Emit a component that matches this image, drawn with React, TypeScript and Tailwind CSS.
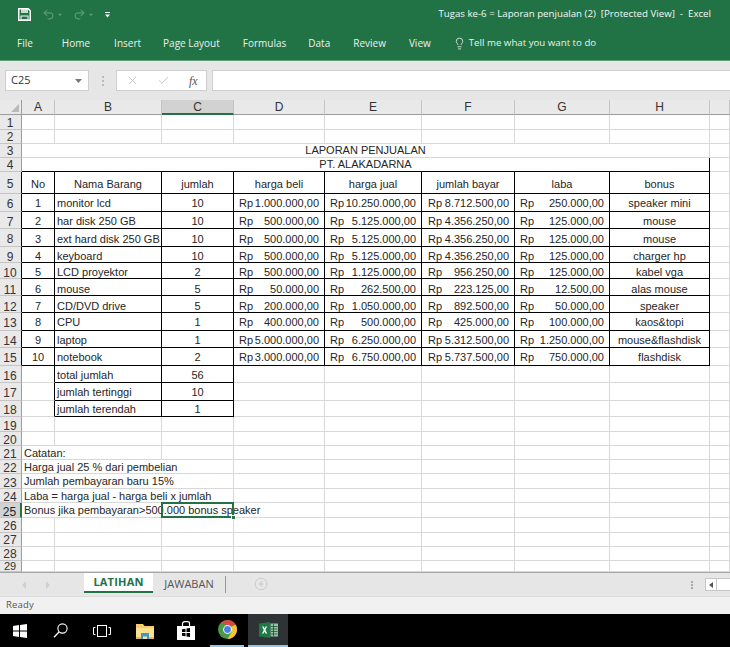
import { Check, CirclePlus, Lightbulb, Redo2, Undo2, X } from 'lucide-react';

const sheetFont = "font-['Liberation_Sans',Arial,sans-serif]";
const uiFont = "font-['Open_Sans','Noto_Sans',sans-serif]";

const rowNumbers = Array.from({ length: 29 }, (_, i) => i + 1);
const columns = ['A', 'B', 'C', 'D', 'E', 'F', 'G', 'H', ''];

type Item = { no: number; name: string; qty: number; buy: string; sell: string; pay: string; profit: string; bonus: string };

const items: Item[] = [
  { no: 1, name: 'monitor lcd', qty: 10, buy: '1.000.000,00', sell: '10.250.000,00', pay: '8.712.500,00', profit: '250.000,00', bonus: 'speaker mini' },
  { no: 2, name: 'har disk 250 GB', qty: 10, buy: '500.000,00', sell: '5.125.000,00', pay: '4.356.250,00', profit: '125.000,00', bonus: 'mouse' },
  { no: 3, name: 'ext hard disk 250 GB', qty: 10, buy: '500.000,00', sell: '5.125.000,00', pay: '4.356.250,00', profit: '125.000,00', bonus: 'mouse' },
  { no: 4, name: 'keyboard', qty: 10, buy: '500.000,00', sell: '5.125.000,00', pay: '4.356.250,00', profit: '125.000,00', bonus: 'charger hp' },
  { no: 5, name: 'LCD proyektor', qty: 2, buy: '500.000,00', sell: '1.125.000,00', pay: '956.250,00', profit: '125.000,00', bonus: 'kabel vga' },
  { no: 6, name: 'mouse', qty: 5, buy: '50.000,00', sell: '262.500,00', pay: '223.125,00', profit: '12.500,00', bonus: 'alas mouse' },
  { no: 7, name: 'CD/DVD drive', qty: 5, buy: '200.000,00', sell: '1.050.000,00', pay: '892.500,00', profit: '50.000,00', bonus: 'speaker' },
  { no: 8, name: 'CPU', qty: 1, buy: '400.000,00', sell: '500.000,00', pay: '425.000,00', profit: '100.000,00', bonus: 'kaos&topi' },
  { no: 9, name: 'laptop', qty: 1, buy: '5.000.000,00', sell: '6.250.000,00', pay: '5.312.500,00', profit: '1.250.000,00', bonus: 'mouse&flashdisk' },
  { no: 10, name: 'notebook', qty: 2, buy: '3.000.000,00', sell: '6.750.000,00', pay: '5.737.500,00', profit: '750.000,00', bonus: 'flashdisk' },
];

const summary = [
  { label: 'total jumlah', value: 56 },
  { label: 'jumlah tertinggi', value: 10 },
  { label: 'jumlah terendah', value: 1 },
];

const notes: Record<number, string> = {
  21: 'Catatan:',
  22: 'Harga jual 25 % dari pembelian',
  23: 'Jumlah pembayaran baru 15%',
  24: 'Laba = harga jual - harga beli x jumlah',
  25: 'Bonus jika pembayaran>500.000 bonus speaker',
};

const tableHead = ['No', 'Nama Barang', 'jumlah', 'harga beli', 'harga jual', 'jumlah bayar', 'laba', 'bonus'];

const grid = 'border-r border-b border-[#d8d8d8]';
const ink = 'border-r border-b border-black';

// text sits a little differently in each row of the scaled screenshot
function rowPad(n: number) {
  if (n >= 9 && n <= 12) return 'pb-0';
  if (n === 7 || n === 8 || n === 14 || n === 16 || n === 18) return 'pb-px';
  if (n === 21 || n === 22 || n === 24) return 'pb-0';
  if (n === 23 || n === 25) return 'pb-px';
  return 'pb-[2px]';
}

function headPad(n: number) {
  if (n === 29) return 'pt-0';
  if (n >= 26) return 'pt-px';
  if (n >= 9 && n <= 12) return 'pt-[5px]';
  return n >= 5 ? 'pt-[3px]' : 'pt-px';
}

function RowHead({ n }: { n: number }) {
  const inTable = n >= 5 && n <= 15;
  return (
    <div
      className={`flex items-center justify-center border-b border-b-[#c4c4c4] border-r pr-px leading-none ${
        n === 29 ? 'text-[11px]' : 'text-[12px]'
      } ${headPad(n)} ${
        n === 25
          ? 'border-r-2 border-r-[#217346] bg-[#d2d2d2] text-[#222]'
          : inTable
            ? 'border-r-black bg-[#e9e9e9] text-[#333]'
            : 'border-r-[#9c9c9c] bg-[#e9e9e9] text-[#333]'
      }`}
    >
      {n}
    </div>
  );
}

function Money({ value, className }: { value: string; className: string }) {
  return (
    <div className={`flex items-end justify-between pr-[5px] ${ink} ${className}`}>
      <span>Rp</span>
      <span>{value}</span>
    </div>
  );
}

function SheetRow({ n }: { n: number }) {
  const pad = rowPad(n);
  if (n === 3 || n === 4) {
    return (
      <>
        <RowHead n={n} />
        <div className={`col-span-8 flex items-center justify-center border-r border-b ${n === 4 ? 'border-black' : 'border-[#d8d8d8]'}`}>
          {n === 3 ? 'LAPORAN PENJUALAN' : 'PT. ALAKADARNA'}
        </div>
        <div className={grid} />
      </>
    );
  }
  if (n === 5) {
    return (
      <>
        <RowHead n={n} />
        {tableHead.map((label) => (
          <div key={label} className={`flex items-end justify-center pb-[3px] ${ink}`}>
            {label}
          </div>
        ))}
        <div className={grid} />
      </>
    );
  }
  if (n >= 6 && n <= 15) {
    const item = items[n - 6];
    return (
      <>
        <RowHead n={n} />
        <div className={`flex items-end justify-center ${pad} ${ink}`}>{item.no}</div>
        <div className={`flex items-end whitespace-nowrap pl-[2px] ${pad} ${ink}`}>{item.name}</div>
        <div className={`flex items-end justify-center ${pad} ${ink}`}>{item.qty}</div>
        <Money value={item.buy} className={`pl-[5px] ${pad}`} />
        <Money value={item.sell} className={`pl-[5px] ${pad}`} />
        <Money value={item.pay} className={`pl-[6px] ${pad}`} />
        <Money value={item.profit} className={`pl-[5px] ${pad}`} />
        <div className={`flex items-end justify-center whitespace-nowrap ${pad} ${ink}`}>{item.bonus}</div>
        <div className={grid} />
      </>
    );
  }
  if (n >= 16 && n <= 18) {
    const row = summary[n - 16];
    return (
      <>
        <RowHead n={n} />
        <div className="border-r border-b border-r-black border-b-[#d8d8d8]" />
        <div className={`flex items-end pl-[2px] ${pad} ${ink}`}>{row.label}</div>
        <div className={`flex items-end justify-center ${pad} ${ink}`}>{row.value}</div>
        {[0, 1, 2, 3, 4, 5].map((i) => (
          <div key={i} className={grid} />
        ))}
      </>
    );
  }
  if (n >= 22 && n <= 24) {
    return (
      <>
        <RowHead n={n} />
        <div className={`col-span-3 flex items-end whitespace-nowrap pl-[2px] ${pad} ${grid}`}>{notes[n]}</div>
        {[0, 1, 2, 3, 4, 5].map((i) => (
          <div key={i} className={grid} />
        ))}
      </>
    );
  }
  return (
    <>
      <RowHead n={n} />
      {columns.map((c, i) => {
        if (i === 1 && notes[n]) return null;
        if (i === 0 && notes[n]) {
          return (
            <div key={c} className={`col-span-2 flex items-end whitespace-nowrap pl-[2px] ${pad} ${grid}`}>
              {notes[n]}
            </div>
          );
        }
        if (i === 2 && n === 25) {
          return (
            <div key={c} className={`relative ${grid}`}>
              <div className="absolute -top-px -left-px -right-px -bottom-px border-2 border-[#217346]" />
              <div className="absolute -right-[3px] -bottom-[3px] h-[5px] w-[5px] border border-white bg-[#217346]" />
            </div>
          );
        }
        return <div key={i} className={grid} />;
      })}
    </>
  );
}

function SaveIcon() {
  return (
    <svg width="13" height="13" viewBox="0 0 13 13" fill="none">
      <path d="M.75.75h9.5l2 2v9.5H.75z" stroke="#fff" strokeWidth="1.5" />
      <rect x="3" y="1" width="7" height="4" fill="#fff" fillOpacity="0.75" />
      <rect x="3" y="8" width="7" height="4" stroke="#fff" strokeWidth="1" />
    </svg>
  );
}

function Caret({ className }: { className: string }) {
  return (
    <svg width="7" height="4" viewBox="0 0 7 4" className={className}>
      <path d="M0 0h7L3.5 4z" fill="currentColor" />
    </svg>
  );
}

function WindowsLogo() {
  return (
    <svg width="14" height="14" viewBox="0 0 14 14" fill="#fff">
      <path d="M0 2l6-.9v5.500H0zM7 1l7-1v6.600H7zM0 7.400h6v5.500L0 12zM7 7.400h7V14l-7-1z" />
    </svg>
  );
}

function SearchIcon() {
  return (
    <svg width="15" height="15" viewBox="0 0 15 15" fill="none" stroke="#fff" strokeWidth="1.100">
      <circle cx="9.500" cy="5.500" r="4.600" />
      <path d="M6.200 8.800L1 14.200" strokeWidth="1.300" />
    </svg>
  );
}

function TaskViewIcon() {
  return (
    <svg width="18" height="12" viewBox="0 0 18 12" fill="none" stroke="#fff">
      <rect x="4.500" y=".5" width="9" height="11" />
      <path d="M2.500 2.500H.5v7h2M15.500 2.500h2v7h-2" />
    </svg>
  );
}

function ExplorerIcon() {
  return (
    <svg width="18" height="16" viewBox="0 0 18 16">
      <path d="M0 1h7l1.500 2H18v13H0z" fill="#f3cd6c" />
      <path d="M0 5h18v11H0z" fill="#fbe08e" />
      <path d="M5 10h8v6h-2v-2.500H7V16H5z" fill="#3f97cf" />
      <path d="M0 14h5v2H0zM13 14h5v2h-5z" fill="#e5b95a" />
    </svg>
  );
}

function StoreIcon() {
  return (
    <svg width="18" height="19" viewBox="0 0 18 19" fill="none">
      <path d="M0 5h18v14H0z" fill="#fff" />
      <path d="M5.500 5V2.500C5.500 1.400 6.400.7 7.500.7h3c1.100 0 2 .7 2 1.800V5" stroke="#fff" strokeWidth="1.200" />
      <path d="M5 8.200l3.500-.5v3.300H5zM9.500 7.600l3.500-.5V11H9.500zM5 12h3.500v3.300L5 14.800zM9.500 12H13v3.900l-3.500-.5z" fill="#000" />
    </svg>
  );
}

function ChromeIcon() {
  return (
    <svg width="19" height="19" viewBox="0 0 19 19">
      <circle cx="9.500" cy="9.500" r="9.500" fill="#4a9a45" />
      <path d="M9.500 0a9.500 9.500 0 0 1 8.230 4.750L9.500 5.500 2.800 2.800A9.500 9.500 0 0 1 9.500 0z" fill="#d9493d" />
      <path d="M17.730 4.750A9.500 9.500 0 0 1 9.500 19l4-7-1-5z" fill="#f2c531" />
      <circle cx="9.500" cy="9.500" r="4.400" fill="#fff" />
      <circle cx="9.500" cy="9.500" r="3.400" fill="#4a80e8" />
    </svg>
  );
}

function ExcelIcon() {
  return (
    <svg width="19" height="16" viewBox="0 0 19 16">
      <path d="M0 1.500L11 0v16L0 14.500z" fill="#1c7a45" />
      <path d="M3 4.500h1.600l1 2 1-2h1.500L6.400 8l1.800 3.500H6.600l-1-2.100-1 2.100H3L4.800 8z" fill="#fff" />
      <path d="M11.500 1.500H19v13h-7.500z" fill="#8fc5a2" />
      <path d="M12 4.500h6.500M12 7h6.500M12 9.500h6.500M12 12h6.500M14.500 2v12" stroke="#163f2a" strokeWidth="0.700" />
    </svg>
  );
}

export default function App() {
  return (
    <div className={`flex h-[647px] w-[730px] flex-col overflow-hidden bg-white ${uiFont}`}>
      {/* Title bar and ribbon tabs */}
      <div className="h-[61px] shrink-0 border-b border-[#5f9d7b] bg-[#217346] text-white">
        <div className="flex h-[29px] items-center pl-[18px]">
          <SaveIcon />
          <Undo2 size={13} strokeWidth={2} className="ml-[11px] text-[#5b9a78]" />
          <Caret className="ml-[3px] w-[4px] text-[#5b9a78]" />
          <Redo2 size={13} strokeWidth={2} className="ml-[11px] text-[#5b9a78]" />
          <Caret className="ml-[3px] w-[4px] text-[#5b9a78]" />
          <div className="ml-[12px] flex flex-col items-center gap-px">
            <div className="h-px w-[5px] bg-white" />
            <Caret className="w-[5px] text-white" />
          </div>
          <span className="ml-auto mr-[19px] text-[9.700px] text-[#f4f8f5]">
            Tugas ke-6 = Laporan penjualan (2)&nbsp; [Protected View]&nbsp; -&nbsp; Excel
          </span>
        </div>
        <div className="flex items-center pt-[7px] text-[10px] text-[#e9f2ec]">
          <span className="ml-[17px]">File</span>
          <span className="ml-[29px]">Home</span>
          <span className="ml-[24px]">Insert</span>
          <span className="ml-[22px]">Page Layout</span>
          <span className="ml-[23px]">Formulas</span>
          <span className="ml-[22px]">Data</span>
          <span className="ml-[23px]">Review</span>
          <span className="ml-[23px]">View</span>
          <Lightbulb size={13} strokeWidth={1.500} className="ml-[22px]" />
          <span className="ml-[3px] text-[9.700px]">Tell me what you want to do</span>
        </div>
      </div>

      {/* Formula bar */}
      <div className="flex h-[39px] shrink-0 items-start bg-[#e6e6e6] pt-[9px]">
        <div className="ml-[5px] flex h-[21px] w-[84px] items-center justify-between border border-[#cfcfcf] bg-white pl-[5px] pr-[6px] text-[11px] text-[#333]">
          C25
          <Caret className="text-[#777]" />
        </div>
        <div className="ml-[13px] mt-[6px] flex flex-col gap-[2px]">
          <div className="h-[2px] w-[2px] bg-[#bbb]" />
          <div className="h-[2px] w-[2px] bg-[#bbb]" />
          <div className="h-[2px] w-[2px] bg-[#bbb]" />
        </div>
        <div className="ml-[12px] flex h-[21px] w-[91px] items-center border border-[#cfcfcf] bg-white pl-[9px]">
          <X size={13} strokeWidth={1.500} className="text-[#bdbdbd]" />
          <Check size={13} strokeWidth={1.500} className="ml-[18px] text-[#bdbdbd]" />
          <span className="ml-[19px] font-['Liberation_Serif',serif] text-[12px] italic text-[#555]">fx</span>
        </div>
        <div className="ml-[5px] h-[21px] flex-1 border border-r-0 border-[#cfcfcf] bg-white" />
      </div>

      {/* Worksheet */}
      <div
        className={`grid h-[472px] shrink-0 grid-cols-[22px_33px_107px_72px_91px_97px_93px_95px_100px_20px] grid-rows-[15px_15px_14px_14px_14px_22px_18px_17px_18px_16px_16px_17px_17px_18px_17px_18px_17px_18px_16px_15px_14px_14px_14px_15px_14px_15px_15px_14px_14px_11px] overflow-hidden text-[11px] leading-none text-[#262626] ${sheetFont}`}
      >
        <div className="flex items-end justify-end border-r border-b border-[#9c9c9c] bg-[#e9e9e9] p-[2px]">
          <div className="h-0 w-0 border-b-[8px] border-l-[8px] border-b-[#b9b9b9] border-l-transparent" />
        </div>
        {columns.map((c, i) => (
          <div
            key={i}
            className={`flex items-center justify-center border-r text-[12px] ${
              c === 'C'
                ? 'border-b-2 border-r-[#c4c4c4] border-b-[#217346] bg-[#d2d2d2] text-[#333]'
                : 'border-b border-r-[#c4c4c4] border-b-[#9c9c9c] bg-[#e9e9e9] text-[#333]'
            }`}
          >
            {c}
          </div>
        ))}
        {rowNumbers.map((n) => (
          <SheetRow key={n} n={n} />
        ))}
      </div>

      {/* Sheet tabs */}
      <div className="flex h-[24px] shrink-0 items-stretch border-t border-[#a6a6a6] bg-[#e6e6e6] text-[11px]">
        <div className="ml-[22px] mt-[8px] h-0 w-0 border-y-[4px] border-r-[4px] border-y-transparent border-r-[#cfcfcf]" />
        <div className="ml-[20px] mt-[8px] h-0 w-0 border-y-[4px] border-l-[4px] border-y-transparent border-l-[#cfcfcf]" />
        <div className="ml-[34px] flex h-[20px] w-[69px] items-center justify-center border-b-2 border-[#217346] bg-white pt-px font-bold tracking-[0.2px] text-[#217346]">
          LATIHAN
        </div>
        <div className="my-[3px] flex w-[73px] items-center justify-center border-r border-[#9a9a9a] text-[#555]">JAWABAN</div>
        <CirclePlus size={14} strokeWidth={1.200} className="ml-[28px] mt-[4px] text-[#c0c0c0]" />
        <div className="ml-[423px] mt-[8px] flex h-[8px] flex-col gap-px">
          <div className="h-[2px] w-[2px] bg-[#a9a9a9]" />
          <div className="h-[2px] w-[2px] bg-[#a9a9a9]" />
          <div className="h-[2px] w-[2px] bg-[#a9a9a9]" />
        </div>
        <div className="ml-[12px] mt-[5px] flex h-[13px] w-[12px] items-center justify-center border border-[#c6c6c6] bg-white">
          <div className="h-0 w-0 border-y-[3px] border-r-[4px] border-y-transparent border-r-[#555]" />
        </div>
        <div className="mt-[5px] h-[13px] flex-1 border-y border-[#c6c6c6] bg-white" />
      </div>

      {/* Status bar */}
      <div className="flex h-[18px] shrink-0 items-center border-t border-[#dcdcdc] bg-[#f1f1f1] pl-[6px] text-[9.500px] tracking-[0.2px] text-[#555]">
        Ready
      </div>

      {/* Windows taskbar */}
      <div className="flex h-[33px] shrink-0 items-stretch bg-black">
        <div className="flex w-[40px] items-center justify-center"><WindowsLogo /></div>
        <div className="flex w-[41px] items-center justify-center"><SearchIcon /></div>
        <div className="flex w-[41px] items-center justify-center"><TaskViewIcon /></div>
        <div className="ml-[2px] flex w-[41px] items-center justify-center"><ExplorerIcon /></div>
        <div className="flex w-[41px] items-center justify-center"><StoreIcon /></div>
        <div className="ml-[4px] flex w-[34px] items-center justify-center border-b-2 border-[#8fc7ee]"><ChromeIcon /></div>
        <div className="ml-[4px] flex w-[40px] items-center justify-center border-b-2 border-[#8fc7ee] bg-[#2f3336]"><ExcelIcon /></div>
      </div>
    </div>
  );
}
